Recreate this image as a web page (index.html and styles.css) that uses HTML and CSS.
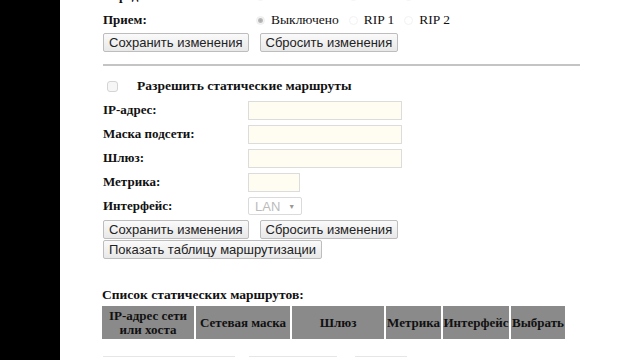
FILE: index.html
```html
<!DOCTYPE html>
<html lang="ru">
<head>
    <meta charset="UTF-8">
    <title>Статическая маршрутизация</title>
    <link rel="stylesheet" href="styles.css">
</head>
<body>
    <div class="page">
        <div class="side"></div>
        <div class="content">
            <!-- RIP -->
            <div class="row row-top">
                <span class="label">Передача:</span>
                <span class="radios">
                    <span class="radio"></span><span class="rtext">Выключено</span>
                    <span class="radio"></span><span class="rtext">RIP 1</span>
                    <span class="radio"></span><span class="rtext">RIP 2</span>
                </span>
            </div>
            <div class="row">
                <span class="label">Прием:</span>
                <span class="radios">
                    <span class="radio checked"></span><span class="rtext">Выключено</span>
                    <span class="radio"></span><span class="rtext">RIP 1</span>
                    <span class="radio"></span><span class="rtext">RIP 2</span>
                </span>
            </div>
            <div class="buttons">
                <button>Сохранить изменения</button>
                <button>Сбросить изменения</button>
            </div>

            <hr class="sep">

            <!-- Static routes -->
            <div class="check-row">
                <span class="checkbox"></span>
                <span class="check-label">Разрешить статические маршруты</span>
            </div>
            <div class="row">
                <span class="label">IP-адрес:</span>
                <span class="field wide"></span>
            </div>
            <div class="row">
                <span class="label">Маска подсети:</span>
                <span class="field wide"></span>
            </div>
            <div class="row">
                <span class="label">Шлюз:</span>
                <span class="field wide"></span>
            </div>
            <div class="row">
                <span class="label">Метрика:</span>
                <span class="field short"></span>
            </div>
            <div class="row">
                <span class="label">Интерфейс:</span>
                <span class="select">LAN <span class="arrow">▼</span></span>
            </div>
            <div class="buttons buttons-low">
                <button>Сохранить изменения</button>
                <button>Сбросить изменения</button>
            </div>
            <div class="buttons buttons-single">
                <button>Показать таблицу маршрутизации</button>
            </div>

            <!-- Route list -->
            <div class="list-title">Список статических маршрутов:</div>
            <table class="routes">
                <tr>
                    <th class="c1">IP-адрес сети<br>или хоста</th>
                    <th class="c2">Сетевая маска</th>
                    <th class="c3">Шлюз</th>
                    <th class="c4">Метрика</th>
                    <th class="c5">Интерфейс</th>
                    <th class="c6">Выбрать</th>
                </tr>
            </table>
            <div class="next">
                <span class="ghost g1"></span>
                <span class="ghost g2"></span>
                <span class="ghost g3"></span>
            </div>
        </div>
    </div>
</body>
</html>
```

FILE: styles.css
```css
body {
    margin: 0;
    background-color: #fff;
    font-family: "Liberation Serif", "Times New Roman", serif;
    color: #111;
    overflow: hidden;
}

.page {
    display: flex;
    height: 360px;
}

.side {
    width: 60px;
    flex-shrink: 0;
    background-color: #000;
}

.content {
    flex: 1;
    padding-left: 43px;
    overflow: hidden;
}

.row {
    display: flex;
    align-items: center;
    height: 24px;
}

.row-top {
    margin-top: -16px;
}

.label {
    width: 145px;
    flex-shrink: 0;
    font-weight: bold;
    font-size: 13px;
}

.radios {
    display: flex;
    align-items: center;
    font-size: 13.5px;
}

.radio {
    width: 9px;
    height: 9px;
    border-radius: 50%;
    border: 1px solid #f2f2f2;
    margin: 0 6px 0 8px;
    box-sizing: border-box;
}

.radio.checked {
    border-color: #eee;
    background: radial-gradient(circle, #aaa 0, #bbb 2px, #f4f4f4 3px);
}

.rtext {
    margin-right: 2px;
}

.buttons {
    display: flex;
    gap: 11px;
    margin-top: 1px;
}

button {
    font-family: "Liberation Sans", Arial, sans-serif;
    font-size: 13px;
    color: #222;
    height: 19px;
    padding: 0 5px;
    background: linear-gradient(#fafafa, #e8e8e8);
    border: 1px solid #bdbdbd;
    border-radius: 2px;
    line-height: 17px;
}

.sep {
    width: 477px;
    margin: 12px 0 0 0;
    border: none;
    border-top: 2px solid #c4c4c4;
}

.check-row {
    display: flex;
    align-items: center;
    height: 24px;
    margin-top: 8px;
}

.checkbox {
    width: 11px;
    height: 11px;
    border: 1px solid #d4d4d4;
    border-radius: 3px;
    background: #f6f6f6;
    margin-left: 4px;
    box-sizing: border-box;
}

.check-label {
    font-weight: bold;
    font-size: 13.5px;
    margin-left: 19px;
}

.field {
    height: 19px;
    box-sizing: border-box;
    border: 1px solid #dcdcdc;
    background-color: #fffdf2;
}

.field.wide {
    width: 154px;
}

.field.short {
    width: 52px;
}

.select {
    display: flex;
    align-items: center;
    gap: 8px;
    height: 18px;
    width: 54px;
    box-sizing: border-box;
    padding-left: 6px;
    border: 1px solid #dadada;
    border-radius: 2px;
    font-family: "Liberation Sans", Arial, sans-serif;
    font-size: 13px;
    color: #bbb;
}

.arrow {
    font-size: 7px;
    color: #999;
}

.buttons-low {
    margin-top: 2px;
}

.list-title {
    font-weight: bold;
    font-size: 13.5px;
    margin-top: 28px;
    margin-left: -1px;
}

.routes {
    border-collapse: separate;
    border-spacing: 2px;
    margin-left: -3px;
    margin-top: 1px;
}

.routes th {
    background-color: #8a8a8a;
    font-size: 13px;
    font-weight: bold;
    line-height: 14px;
    height: 33px;
    padding: 0;
    color: #111;
}

.c1 { width: 92px; }
.c2 { width: 94px; }
.c3 { width: 92px; }
.c4 { width: 55px; }
.c5 { width: 66px; }
.c6 { width: 54px; }

.next {
    display: flex;
    margin-top: 15px;
}

.ghost {
    height: 10px;
    border-top: 1px solid #e6e6e6;
}

.g1 { width: 132px; }
.g2 { width: 88px; margin-left: 14px; }
.g3 { width: 52px; margin-left: 18px; }
```
